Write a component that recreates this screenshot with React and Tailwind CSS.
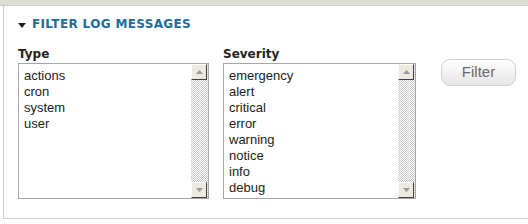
import React from "react";

const ScrollArrow = ({ down }) => (
  <div className="w-[16px] h-[16px] bg-[#ece9e0] border-t border-l border-t-white border-l-white border-r border-b border-r-[#404040] border-b-[#404040] flex items-center justify-center">
    <svg width="7" height="4" viewBox="0 0 7 4">
      {down ? (
        <path d="M0 0 H7 L3.5 4 Z" fill="#9a9a9a" />
      ) : (
        <path d="M0 4 H7 L3.5 0 Z" fill="#9a9a9a" />
      )}
    </svg>
  </div>
);

const ListBox = ({ items, width }) => (
  <div
    className={`${width} h-[136px] border border-[#a5a5a5] bg-white flex`}
  >
    <ul className="flex-1 pl-[5px] pt-[4px] text-[13px] leading-[16px] text-[#222] font-['Liberation_Sans',Arial,sans-serif]">
      {items.map((item) => (
        <li key={item}>{item}</li>
      ))}
    </ul>
    <div className="w-[17px] flex flex-col bg-[conic-gradient(#ffffff_25%,#c8c8c8_0_50%,#ffffff_0_75%,#c8c8c8_0)] bg-[length:2px_2px]">
      <ScrollArrow />
      <div className="flex-1" />
      <ScrollArrow down />
    </div>
  </div>
);

const App = () => {
  return (
    <div className="w-[528px] h-[224px] bg-white overflow-hidden">
      <div className="h-[6px] bg-[#deded6] border-b border-[#cfcfc4]" />
      <div className="ml-[3px] h-[213px] border-l border-b border-[#cccccc] pl-[14px] pt-[11px] font-['DejaVu_Sans',Verdana,sans-serif]">
        <div className="flex items-center h-[14px] text-[12px] font-bold tracking-[0.35px] text-[#1b6d9e] uppercase">
          <svg width="8" height="5" viewBox="0 0 8 5" className="mr-[6px] mt-[2px]">
            <path d="M0 0 H8 L4 5 Z" fill="#222" />
          </svg>
          Filter log messages
        </div>
        <div className="flex mt-[14px]">
          <div>
            <div className="text-[12px] font-bold text-[#222] h-[18px]">Type</div>
            <ListBox
              width="w-[191px]"
              items={["actions", "cron", "system", "user"]}
            />
          </div>
          <div className="ml-[14px]">
            <div className="text-[12px] font-bold text-[#222] h-[18px]">Severity</div>
            <ListBox
              width="w-[193px]"
              items={[
                "emergency",
                "alert",
                "critical",
                "error",
                "warning",
                "notice",
                "info",
                "debug",
              ]}
            />
          </div>
          <div className="ml-[25px] pt-[14px]">
            <button className="w-[75px] h-[27px] rounded-[9px] border border-[#d0d0d0] bg-gradient-to-b from-white to-[#e6e6e6] text-[15px] text-[#6a6a6a] font-['Liberation_Sans',Arial,sans-serif]">
              Filter
            </button>
          </div>
        </div>
      </div>
    </div>
  );
};

export default App;
